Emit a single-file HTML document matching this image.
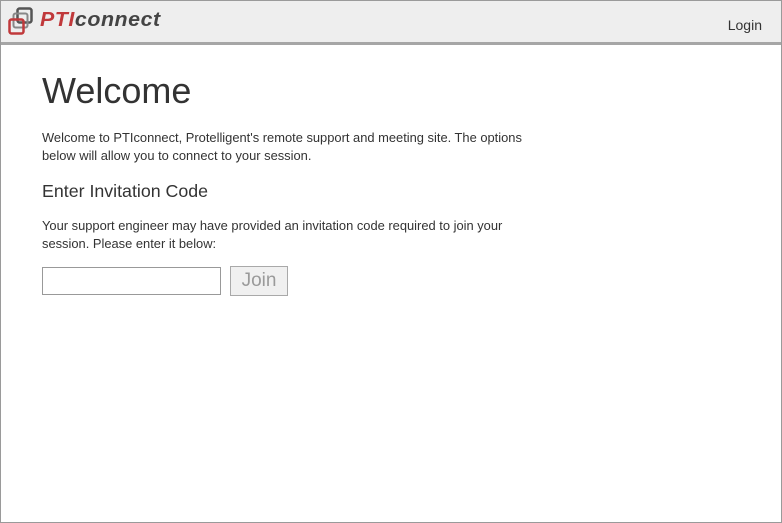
<!DOCTYPE html>
<html><head><meta charset="utf-8"><style>
body{margin:0;width:782px;height:523px;overflow:hidden;background:#fff;font-family:"Liberation Sans",sans-serif;color:#3a3a3a}
.frame{position:absolute;left:0;top:0;width:780px;height:521px;border:1px solid #9a9a9a;}
.hdr{position:absolute;left:0;top:0;width:780px;height:41px;background:#eeeeee;border-bottom:3px solid #a6a6a6}
.logo{position:absolute;left:39px;top:8px;font-size:20px;font-weight:bold;font-style:italic;letter-spacing:0.5px;transform:scaleX(1.07);transform-origin:left}
.login{position:absolute;right:19px;top:16px;font-size:14px;color:#333}
h1{position:absolute;left:41px;top:69px;margin:0;font-weight:normal;font-size:36px;color:#333}
p{position:absolute;left:41px;margin:0;font-size:12.9px;line-height:17.5px;color:#333}
h2{position:absolute;left:41px;top:180px;margin:0;font-weight:normal;font-size:17.8px;color:#333}
.inp{position:absolute;left:41px;top:266px;width:177px;height:26px;border:1px solid #999;background:#fff}
.btn{position:absolute;left:229px;top:265px;width:56px;height:28px;border:1px solid #a9a9a9;background:#f0f0f0;color:#9a9a9a;font-size:19px;text-align:center;line-height:28px}
</style></head><body>
<div class="frame">
<div class="hdr">
<svg style="position:absolute;left:7px;top:6px" width="26" height="29" viewBox="0 0 26 29">
<rect x="9.5" y="1.5" width="14" height="14" rx="2" fill="none" stroke="#555" stroke-width="2.5"/>
<rect x="5.5" y="6.5" width="14" height="14" rx="2" fill="none" stroke="#888" stroke-width="2"/>
<rect x="1.5" y="12.5" width="14" height="14" rx="2" fill="none" stroke="#c0393b" stroke-width="2.5"/>
</svg>
<div class="logo"><span style="color:#c0393b">PTI</span><span style="color:#444">connect</span></div>
<div class="login">Login</div>
</div>
<h1>Welcome</h1>
<p style="top:128px">Welcome to PTIconnect, Protelligent's remote support and meeting site. The options<br>below will allow you to connect to your session.</p>
<h2>Enter Invitation Code</h2>
<p style="top:216px">Your support engineer may have provided an invitation code required to join your<br>session. Please enter it below:</p>
<div class="inp"></div>
<div class="btn">Join</div>
</div>
</body></html>
